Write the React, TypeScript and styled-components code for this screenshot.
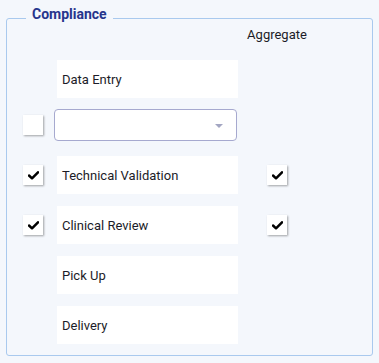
import React from "react";
import styled, { createGlobalStyle } from "styled-components";

const Global = createGlobalStyle`
  html, body { margin: 0; padding: 0; background: #f4f7fc; }
  body { font-family: Roboto, "Liberation Sans", sans-serif; color: #1c1c28; }
  * { box-sizing: border-box; }
`;

const Panel = styled.section`
  position: relative;
  margin: 18px 0 0 6px;
  width: 367px;
  height: 338px;
  border: 1px solid #a9c9ee;
  border-radius: 3px;
  padding: 8px 0 0 16px;
`;

const Title = styled.span`
  position: absolute;
  top: -13px;
  left: 19px;
  padding: 0 6px;
  background: #f4f7fc;
  font-size: 14px;
  line-height: 16px;
  font-weight: 700;
  color: #27358c;
`;

const Rows = styled.div`
  display: flex;
  flex-direction: column;
  gap: 12px;
`;

const Row = styled.div<{ $h: number; $mt?: number; $mb?: number }>`
  display: grid;
  grid-template-columns: 34px 190px 60px;
  align-items: center;
  height: ${(p) => p.$h}px;
  margin-top: ${(p) => p.$mt ?? 0}px;
  margin-bottom: ${(p) => p.$mb ?? 0}px;
`;

const Header = styled.div`
  grid-column: 3;
  font-size: 13px;
  line-height: 16px;
  text-align: center;
`;

const Label = styled.div`
  grid-column: 2;
  width: 181px;
  height: 38px;
  background: #fff;
  display: flex;
  align-items: center;
  padding-left: 5px;
  font-size: 13px;
`;

const Box = styled.div<{ $col: number }>`
  grid-column: ${(p) => p.$col};
  justify-self: ${(p) => (p.$col === 1 ? "start" : "center")};
  width: 20px;
  height: 20px;
  background: #fff;
  box-shadow: 1px 1px 2px rgba(0, 0, 0, 0.35);
  display: flex;
  align-items: center;
  justify-content: center;
`;

const Select = styled.div`
  grid-column: 2;
  margin-left: -3px;
  width: 183px;
  height: 32px;
  background: #fff;
  border: 1px solid #a6a9cf;
  border-radius: 4px;
  display: flex;
  align-items: center;
  justify-content: flex-end;
  padding-right: 13px;
`;

const Caret = styled.span`
  width: 0;
  height: 0;
  border-left: 4px solid transparent;
  border-right: 4px solid transparent;
  border-top: 4px solid #a3a6c2;
  margin-top: 2px;
`;

const Check = () => (
  <svg width="11" height="9" viewBox="0 0 11 9">
    <polyline
      points="1,4.5 4,7.3 10,1.3"
      fill="none"
      stroke="#000"
      strokeWidth="2.5"
      strokeLinecap="round"
      strokeLinejoin="round"
    />
  </svg>
);

type Item = { label: string; left: boolean; agg: boolean };

const items: Item[] = [
  { label: "Technical Validation", left: true, agg: true },
  { label: "Clinical Review", left: true, agg: true },
  { label: "Pick Up", left: false, agg: false },
  { label: "Delivery", left: false, agg: false },
];

export default function App() {
  return (
    <>
      <Global />
      <Panel>
        <Title>Compliance</Title>
        <Rows>
          <Row $h={16} $mb={5}>
            <Header>Aggregate</Header>
          </Row>
          <Row $h={38}>
            <Label>Data Entry</Label>
          </Row>
          <Row $h={32} $mt={-1} $mb={3}>
            <Box $col={1} />
            <Select>
              <Caret />
            </Select>
          </Row>
          {items.map((it) => (
            <Row $h={38} key={it.label}>
              {it.left ? (
                <Box $col={1}>
                  <Check />
                </Box>
              ) : null}
              <Label>{it.label}</Label>
              {it.agg ? (
                <Box $col={3}>
                  <Check />
                </Box>
              ) : null}
            </Row>
          ))}
        </Rows>
      </Panel>
    </>
  );
}
